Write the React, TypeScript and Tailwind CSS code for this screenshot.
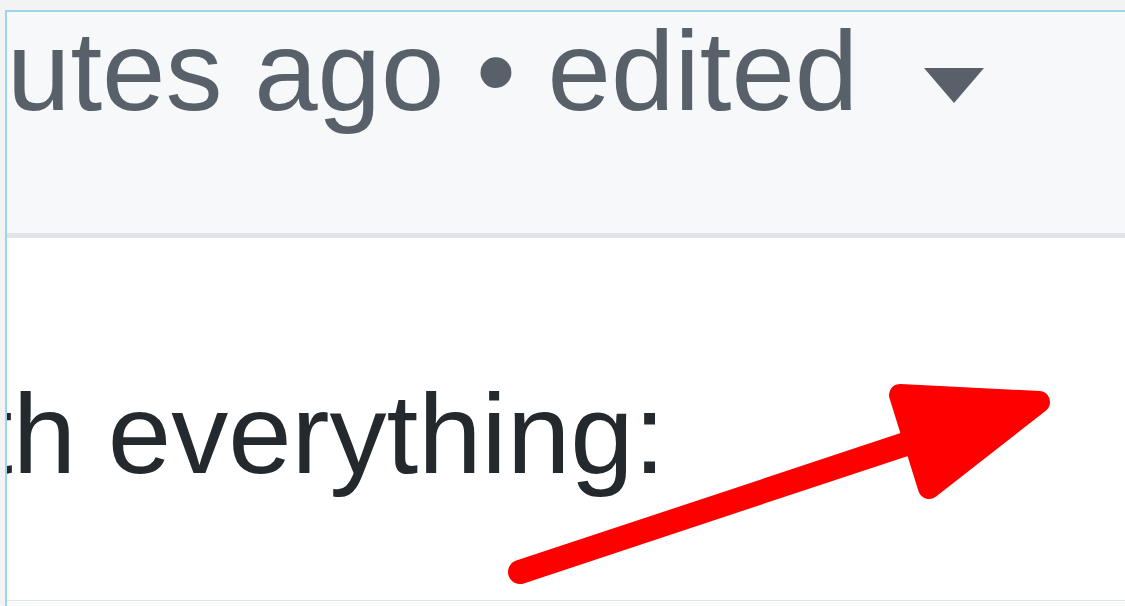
import React from "react";

export default function App() {
  return (
    <div className="relative w-[1125px] h-[606px] overflow-hidden bg-[#f2f4f3] pt-[10px] pl-[5px] font-['Liberation_Sans',Arial,sans-serif]">
      <div className="flex h-[596px] flex-col border-l-2 border-t-2 border-[#9fd4ee] bg-white">
        <div className="flex h-[226px] shrink-0 items-start border-b-[5px] border-[#e1e4e8] bg-[#f6f8fa] pt-[2px]">
          <span className="whitespace-nowrap text-[114px] leading-[114px] text-[#586069]">
            utes ago • edited
          </span>
          <svg
            className="ml-[66px] mt-[54px] shrink-0"
            width="60"
            height="35"
            viewBox="0 0 60 35"
          >
            <polygon points="0,0 60,0 30,35" fill="#5a6069" />
          </svg>
        </div>
        <div className="h-[362px] shrink-0 overflow-hidden bg-white pt-[139px]">
          <div className="ml-[-26px] whitespace-nowrap text-[114px] leading-[114px] text-[#24292e]">
            th everything:
          </div>
        </div>
        <div className="flex-1 border-t border-[#e1e4e8] bg-[#fafbfb]" />
      </div>
      <svg
        className="pointer-events-none absolute left-0 top-0"
        width="1125"
        height="606"
        viewBox="0 0 1125 606"
      >
        <line
          x1="520"
          y1="572"
          x2="930"
          y2="436"
          stroke="#ff0000"
          strokeWidth="24"
          strokeLinecap="round"
        />
        <polygon
          points="900,395 1039,402 929,488"
          fill="#ff0000"
          stroke="#ff0000"
          strokeWidth="22"
          strokeLinejoin="round"
        />
      </svg>
    </div>
  );
}
